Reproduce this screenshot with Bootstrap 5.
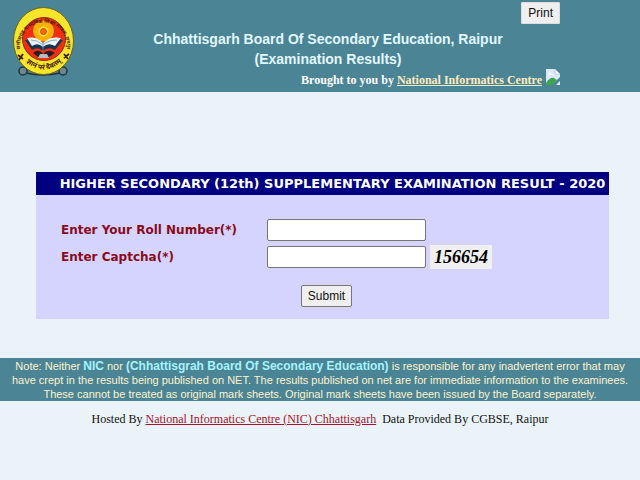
<!DOCTYPE html>
<html lang="en">
<head>
<meta charset="utf-8">
<meta name="viewport" content="width=device-width, initial-scale=1">
<title>CGBSE Examination Results</title>
<link rel="stylesheet" href="https://cdn.jsdelivr.net/npm/bootstrap@5.3.0/dist/css/bootstrap.min.css">
<style>
body{background:#eaf3f7;font-family:"Liberation Serif",serif;font-size:12px;line-height:16px;color:#111}
.masthead{background:#4b8494;color:#fff;min-height:92px}
.logo-col{width:96px;padding:7px 0 0 12px}
.head-col{padding:2px 0 0}
.right-gap{width:80px}
.site-title{font:bold 14px/20px "Liberation Sans",sans-serif;color:#e2f8ff;margin:5px 0 0}
.credit{font-weight:bold;line-height:22px}
.credit a{color:#fdebc0}
.plain-btn{font:12px/18px "Liberation Sans",sans-serif;color:#111;background:#efefef;border:1px solid #767676;border-radius:2px;padding:1px 6px}
.print-btn{border-color:#ddd;border-radius:1px}
.form-area{padding:80px 31px 0 36px}
.panel-box{background:#d4d4ff}
.panel-title{background:#000080;color:#fff;font:bold 13px/22px "DejaVu Sans",sans-serif;margin:0;padding:1px 0 0 20px}
.panel-body{padding:24px 25px 12px}
.field-label{font:bold 12px/22px "DejaVu Sans",sans-serif;color:#8b0a1a;width:206px}
.text-box{width:159px;height:22px;border:1px solid #767676;border-radius:2px;background:#fff;font-size:13px;padding:1px 3px}
.captcha-code{background:#f0f0f0;font:italic bold 18px/24px "Liberation Serif",serif;color:#000;padding:0 4px;margin-left:4px}
.notice{background:#4b8494;color:#fdf3cf;font:11px/14px "Liberation Sans",sans-serif;padding:1px 4px 0;margin:39px 0 0}
.notice strong{color:#a5f3ff;font-size:12px}
.site-footer{padding:10px 0}
.site-footer a{color:#a8122a}
.seal-text{font-family:"Noto Sans",sans-serif;font-weight:bold;fill:#4a1d10}
</style>
</head>
<body>
<header class="masthead d-flex">
  <div class="logo-col flex-shrink-0">
    <svg width="63" height="70" viewBox="0 0 63 70" role="img" aria-label="Board seal">
      <defs>
        <path id="arcTop" d="M9 46A23.500 23.500 0 1 1 54 46"/>
        <path id="arcBottom" d="M11 52Q31 73 53 52"/>
      </defs>
      <g fill="#6b8791" stroke="#23313a" stroke-width="1.5"><circle cx="11" cy="64" r="4"/><circle cx="51" cy="64" r="4"/><path d="M14 66Q31 70 48 66"/></g>
      <ellipse cx="31.500" cy="34" rx="30" ry="33.500" fill="#f6e52a" stroke="#6d6416"/>
      <ellipse cx="32" cy="32" rx="21.500" ry="21.500" fill="#f02e12" stroke="#8c2a12"/>
      <circle cx="31.500" cy="24" r="10.500" fill="#ffb008"/>
      <circle cx="31.500" cy="24.500" r="5" fill="#ffde3a"/><circle cx="31.500" cy="24.500" r="3" fill="#fb6a09" stroke="#a5340b" stroke-width=".7"/>
      <path d="M13 33Q24 30 31 36Q39 30 51 33L43 43Q36 39 31 44Q26 39 20 43Z" fill="#17364e"/>
      <path d="M15 31Q24 29 31 36Q39 29 49 31L43 39Q36 35 31 40Q26 35 20 39Z" fill="#eef6fb"/>
      <path d="M31 36V44M19 33Q26 33 31 38Q36 33 45 33" fill="none" stroke="#6d9bb8" stroke-width=".8"/>
      <path d="M21 46Q27 41 31 47Q36 41 43 46L37 50H26Z" fill="#241e24"/><path d="M28 47H35L37 51H26Z" fill="#b8bac0"/>
      <text class="seal-text" font-size="5"><textPath href="#arcTop" startOffset="50%" text-anchor="middle">छत्तीसगढ़ माध्यमिक शिक्षा मण्डल, रायपुर</textPath></text>
      <text class="seal-text" font-size="7"><textPath href="#arcBottom" startOffset="50%" text-anchor="middle">ज्ञानं परं दैवतम्</textPath></text>
      <path d="M6 48l5 4M11 47l-4 6M52 51l5-4M52 47l4 5" stroke="#3b1d15" stroke-width="1.800"/>
    </svg>
  </div>
  <div class="head-col flex-grow-1 text-center">
    <div class="text-end"><button type="button" class="plain-btn print-btn">Print</button></div>
    <h1 class="site-title">Chhattisgarh Board Of Secondary Education, Raipur<br>(Examination Results)</h1>
    <div class="credit d-flex justify-content-end">
      <span>Brought to you by <a href="#">National Informatics Centre</a></span>
      <svg class="ms-1" width="14" height="16" viewBox="0 0 14 16" role="img" aria-label="Missing picture">
        <path d="M0 0H9L14 5V10L9 16H0Z" fill="#dce9fa"/><path d="M9 0V5H14Z" fill="#fff" stroke="#a9b8c4" stroke-width=".6"/>
        <path d="M2 6Q2 4 4 4Q6 3 7 6Z" fill="#fff"/><path d="M0 14Q4 8 8 9L11 11L7 16H0Z" fill="#3da64a"/><path d="M6 16L14 8V16Z" fill="#4b8494"/><path d="M10 16L14 12V16Z" fill="#e8eef2"/>
      </svg>
    </div>
  </div>
  <div class="right-gap flex-shrink-0"></div>
</header>
<main>
  <div class="form-area">
    <form class="panel-box" onsubmit="return false">
      <h2 class="panel-title text-center">HIGHER SECONDARY (12th) SUPPLEMENTARY EXAMINATION RESULT - 2020</h2>
      <div class="panel-body">
        <div class="d-flex align-items-center">
          <label class="field-label" for="roll">Enter Your Roll Number(*)</label>
          <input class="text-box" type="text" id="roll">
        </div>
        <div class="d-flex align-items-center mt-1">
          <label class="field-label" for="captcha">Enter Captcha(*)</label>
          <input class="text-box" type="text" id="captcha">
          <span class="captcha-code">156654</span>
        </div>
        <div class="text-center mt-3 ps-2"><button type="submit" class="plain-btn">Submit</button></div>
      </div>
    </form>
  </div>
  <p class="notice text-center">Note: Neither <strong>NIC</strong> nor <strong>(Chhattisgrah Board Of Secondary Education)</strong> is responsible for any inadvertent error that may<br>have crept in the results being published on NET. The results published on net are for immediate information to the examinees.<br>These cannot be treated as original mark sheets. Original mark sheets have been issued by the Board separately.</p>
</main>
<footer class="site-footer text-center">Hosted By <a href="#">National Informatics Centre (NIC) Chhattisgarh</a>&nbsp; Data Provided By CGBSE, Raipur</footer>
<script src="https://cdn.jsdelivr.net/npm/bootstrap@5.3.0/dist/js/bootstrap.bundle.min.js"></script>
</body>
</html>
